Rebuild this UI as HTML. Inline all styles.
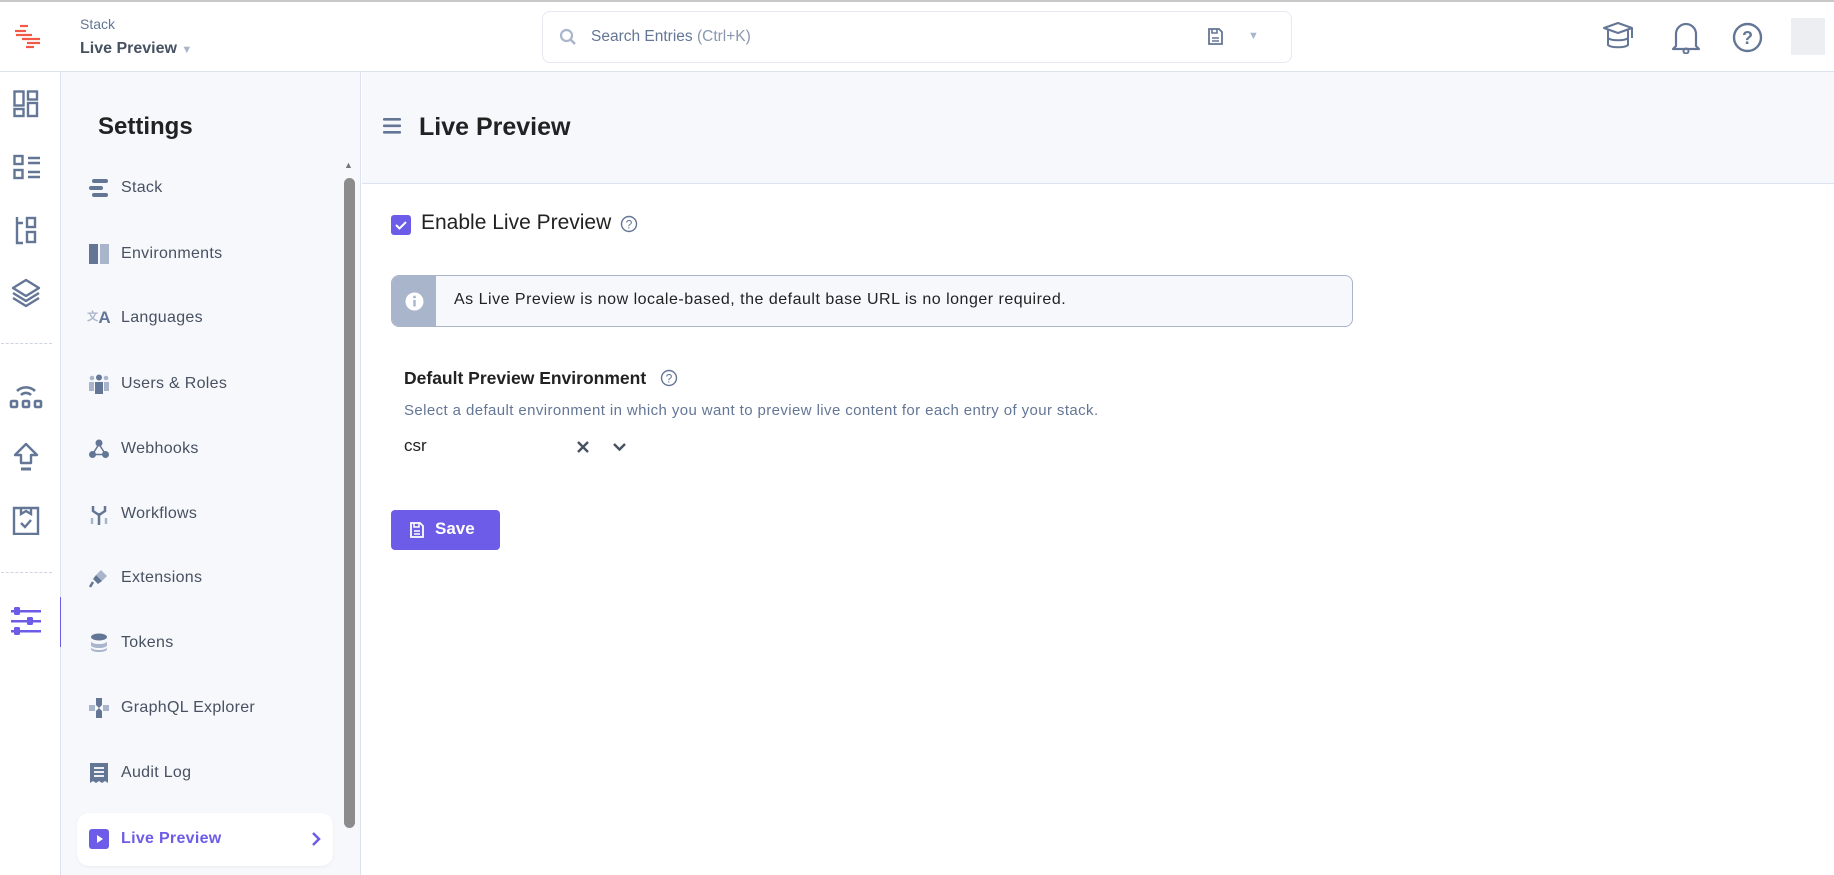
<!DOCTYPE html>
<html><head><meta charset="utf-8"><style>
*{box-sizing:border-box;margin:0;padding:0}
body{width:1834px;height:875px;overflow:hidden;background:#fff;font-family:"Liberation Sans",sans-serif;color:#475161;position:relative}
.abs{position:absolute}
.top{left:0;top:0;width:1834px;height:72px;border-top:2px solid #c8c8c8;border-bottom:1px solid #dde3ee;background:#fff}
.nav{left:0;top:72px;width:61px;height:803px;background:#fff;border-right:1px solid #dde3ee}
.side{left:61px;top:72px;width:300px;height:803px;background:#f7f8fc;border-right:1px solid #dde3ee}
.item{position:absolute;left:0;width:270px;height:40px;display:flex;align-items:center;font-size:16px;color:#475161;letter-spacing:.3px}
.item .ic{width:22px;margin-left:27px;margin-right:11px;display:flex;justify-content:center}
.ph{left:362px;top:72px;width:1472px;height:112px;background:#f7f8fc;border-bottom:1px solid #dde3ee}
svg{display:block}
</style></head><body>
<div class="abs top">
 <svg class="abs" style="left:12px;top:22px" width="30" height="26" viewBox="0 0 30 26"><g stroke="#f05a47" stroke-width="2.2"><line x1="8" y1="2" x2="16" y2="2"/><line x1="3" y1="7" x2="14" y2="7"/><line x1="4" y1="11" x2="20" y2="11"/><line x1="10" y1="15" x2="28" y2="15"/><line x1="15" y1="19" x2="28" y2="19"/><line x1="14" y1="23" x2="22" y2="23"/></g></svg>
 <div class="abs" style="left:80px;top:14px;font-size:14px;color:#647696">Stack</div>
 <div class="abs" style="left:80px;top:38px;font-size:16px;font-weight:bold;color:#475161">Live Preview <span style="color:#a9b5cb;font-size:11px">▼</span></div>
 <div class="abs" style="left:542px;top:9px;width:750px;height:52px;border:1px solid #e6e9f0;border-radius:8px">
  <svg class="abs" style="left:16px;top:16px" width="18" height="18" viewBox="0 0 18 18"><circle cx="7.5" cy="7.5" r="5.5" stroke="#a9b5cb" stroke-width="2.2" fill="none"/><line x1="11.5" y1="11.5" x2="16" y2="16" stroke="#a9b5cb" stroke-width="2.5"/></svg>
  <div class="abs" style="left:48px;top:16px;font-size:15.5px;color:#647696">Search Entries <span style="color:#8a97ad">(Ctrl+K)</span></div>
  <svg class="abs" style="left:664px;top:16px" width="16" height="17" viewBox="0 0 16 17"><path d="M2 1h10l3 3v12H2z" fill="none" stroke="#647696" stroke-width="1.8"/><path d="M5 1v4h5V1M5 10h7M5 13h7" stroke="#647696" stroke-width="1.6" fill="none"/></svg>
  <div class="abs" style="left:705px;top:18px;font-size:11px;color:#a9b5cb">▼</div>
 </div>
 <svg class="abs" style="left:1601px;top:19px" width="34" height="30" viewBox="0 0 34 30"><path d="M3 7L17 2l14 5-14 5z" fill="none" stroke="#647696" stroke-width="2" stroke-linejoin="round"/><path d="M7 9v15c3 3 17 3 20 0V9M7 17c3 3 17 3 20 0M31 7v10" fill="none" stroke="#647696" stroke-width="2"/></svg>
 <svg class="abs" style="left:1670px;top:18px" width="32" height="34" viewBox="0 0 32 34"><path d="M6 26V14a10 10 0 0120 0v12l3 3H3z" fill="none" stroke="#647696" stroke-width="2.2" stroke-linejoin="round"/><circle cx="16" cy="31" r="2.5" fill="none" stroke="#647696" stroke-width="2"/></svg>
 <svg class="abs" style="left:1732px;top:20px" width="31" height="31" viewBox="0 0 31 31"><circle cx="15.5" cy="15.5" r="13.5" fill="none" stroke="#647696" stroke-width="2.4"/><text x="15.5" y="22" text-anchor="middle" font-family="Liberation Sans" font-weight="bold" font-size="18" fill="#647696">?</text></svg>
 <div class="abs" style="left:1791px;top:16px;width:34px;height:37px;background:#edeef1"></div>
</div>
<div class="abs nav">
 <svg class="abs" style="left:13px;top:18px" width="26" height="28" viewBox="0 0 26 28" fill="none" stroke="#647696" stroke-width="2.4"><rect x="1.5" y="1.5" width="9" height="14"/><rect x="15" y="1.5" width="9" height="8"/><rect x="1.5" y="19" width="9" height="7"/><rect x="15" y="13" width="9" height="13"/></svg>
 <svg class="abs" style="left:13px;top:82px" width="28" height="26" viewBox="0 0 28 26" fill="none" stroke="#647696" stroke-width="2.4"><rect x="1.5" y="2" width="8" height="8"/><rect x="1.5" y="16" width="8" height="8"/><path d="M15 4h12M15 9h12M15 18h12M15 23h12"/></svg>
 <svg class="abs" style="left:15px;top:143px" width="24" height="30" viewBox="0 0 24 30" fill="none" stroke="#647696" stroke-width="2.4"><path d="M2 2v26h6M2 8h6"/><rect x="12" y="3" width="8" height="9"/><rect x="12" y="17" width="8" height="10"/></svg>
 <svg class="abs" style="left:11px;top:206px" width="30" height="30" viewBox="0 0 30 30" fill="none" stroke="#647696" stroke-width="2.4" stroke-linejoin="round"><path d="M15 2L28 10 15 18 2 10z"/><path d="M2 15l13 8 13-8M2 20l13 8 13-8"/></svg>
 <div class="abs" style="left:1px;top:271px;width:51px;border-top:1px dashed #cfd5df"></div>
 <svg class="abs" style="left:9px;top:308px" width="34" height="30" viewBox="0 0 34 30" fill="none" stroke="#647696" stroke-width="2.6"><path d="M8 11a13 13 0 0118 0M12 15a7 7 0 0110 0"/><rect x="2" y="21" width="6" height="6" rx="1"/><rect x="14" y="21" width="6" height="6" rx="1"/><rect x="26" y="21" width="6" height="6" rx="1"/></svg>
 <svg class="abs" style="left:13px;top:370px" width="26" height="30" viewBox="0 0 26 30" fill="none" stroke="#647696" stroke-width="2.4" stroke-linejoin="round"><path d="M13 2L2 13h6v8h10v-8h6z"/><path d="M8 27h10" stroke-width="3"/></svg>
 <svg class="abs" style="left:12px;top:433px" width="28" height="30" viewBox="0 0 28 30" fill="none" stroke="#647696" stroke-width="2.4"><path d="M2 3h24v26H2z"/><path d="M9 3v6l5-3 5 3V3M9 18l4 4 6-7"/></svg>
 <div class="abs" style="left:1px;top:500px;width:51px;border-top:1px dashed #cfd5df"></div>
 <div class="abs" style="left:60px;top:525px;width:2px;height:50px;background:#6c5ce7"></div>
 <svg class="abs" style="left:10px;top:534px" width="32" height="30" viewBox="0 0 32 30" fill="#6c5ce7"><rect x="1" y="4" width="30" height="2.5"/><rect x="1" y="14" width="30" height="2.5"/><rect x="1" y="24" width="30" height="2.5"/><rect x="4" y="1" width="6" height="8" rx="1.5"/><rect x="17" y="11" width="6" height="8" rx="1.5"/><rect x="4" y="21" width="6" height="8" rx="1.5"/></svg>
</div>
<div class="abs side">
 <div class="abs" style="left:37px;top:41px;font-size:24px;font-weight:bold;color:#222">Settings</div>
 <div class="item" style="top:96px"><span class="ic"><svg width="20" height="18" viewBox="0 0 20 18" fill="#647696"><rect x="3" y="0" width="16" height="4" rx="2"/><rect x="0" y="7" width="14" height="4" rx="2"/><rect x="3" y="14" width="16" height="4" rx="2"/></svg></span>Stack</div>
 <div class="item" style="top:162px"><span class="ic"><svg width="20" height="20" viewBox="0 0 20 20"><rect x="0" y="0" width="9" height="20" fill="#647696"/><rect x="11" y="0" width="9" height="20" fill="#a9b5cb"/></svg></span>Environments</div>
 <div class="item" style="top:226px"><span class="ic" style="font-weight:bold;color:#647696;font-size:17px"><span style="font-size:11px;color:#a9b5cb;vertical-align:top">文</span>A</span>Languages</div>
 <div class="item" style="top:292px"><span class="ic"><svg width="20" height="20" viewBox="0 0 20 20"><circle cx="10" cy="3.5" r="3" fill="#647696"/><circle cx="3" cy="4" r="2.3" fill="#a9b5cb"/><circle cx="17" cy="4" r="2.3" fill="#a9b5cb"/><rect x="6" y="8" width="8" height="12" fill="#647696"/><rect x="0" y="8" width="5" height="9" fill="#a9b5cb"/><rect x="15" y="8" width="5" height="9" fill="#a9b5cb"/></svg></span>Users &amp; Roles</div>
 <div class="item" style="top:357px"><span class="ic"><svg width="20" height="20" viewBox="0 0 20 20" fill="#647696"><circle cx="10" cy="4" r="3.5"/><circle cx="3.5" cy="15.5" r="3.5"/><circle cx="16.5" cy="15.5" r="3.5"/><path d="M10 5L3.5 15.5h13z" fill="none" stroke="#647696" stroke-width="1.5"/></svg></span>Webhooks</div>
 <div class="item" style="top:422px"><span class="ic"><svg width="20" height="22" viewBox="0 0 20 22" fill="none" stroke-width="2.5"><path d="M10 10v12" stroke="#647696"/><path d="M4 3v5l6 4 6-4V3" stroke="#647696"/><path d="M3 21v-6M17 21v-6" stroke="#a9b5cb"/></svg></span>Workflows</div>
 <div class="item" style="top:486px"><span class="ic"><svg width="20" height="20" viewBox="0 0 20 20"><path d="M12 2l6 6-5 5-6-6z" fill="#a9b5cb"/><path d="M7 7l6 6-4 3-5-5z" fill="#647696"/><path d="M4 14l-3 5" stroke="#647696" stroke-width="2.5"/></svg></span>Extensions</div>
 <div class="item" style="top:551px"><span class="ic"><svg width="18" height="20" viewBox="0 0 18 20"><ellipse cx="9" cy="4" rx="8" ry="3.5" fill="#647696"/><path d="M1 8c0 4 16 4 16 0v4c0 4-16 4-16 0z" fill="#a9b5cb"/><path d="M1 14c0 4 16 4 16 0v2c0 4-16 4-16 0z" fill="#a9b5cb"/></svg></span>Tokens</div>
 <div class="item" style="top:616px"><span class="ic"><svg width="20" height="20" viewBox="0 0 20 20"><rect x="0" y="7" width="6" height="6" fill="#a9b5cb"/><rect x="14" y="7" width="6" height="6" fill="#a9b5cb"/><path d="M7 0h6v7l-3 3-3-3zM7 20h6v-7l-3-3-3 3z" fill="#647696"/></svg></span>GraphQL Explorer</div>
 <div class="item" style="top:681px"><span class="ic"><svg width="18" height="20" viewBox="0 0 18 20"><path d="M0 0h18v20l-3-2-3 2-3-2-3 2-3-2-3 2z" fill="#647696"/><path d="M4 5h10M4 9h10M4 13h10" stroke="#fff" stroke-width="1.8"/></svg></span>Audit Log</div>
 <div class="abs" style="left:16px;top:741px;width:256px;height:53px;background:#fff;border-radius:12px;box-shadow:0 1px 3px rgba(0,0,0,.05)"></div>
 <div class="item" style="top:747px;color:#6c5ce7;font-weight:bold;width:260px"><span class="ic"><svg width="20" height="20" viewBox="0 0 20 20"><rect width="20" height="20" rx="3" fill="#6c5ce7"/><path d="M8 6l6 4-6 4z" fill="#fff"/></svg></span>Live Preview<svg style="margin-left:auto" width="10" height="16" viewBox="0 0 10 16"><path d="M2 2l6 6-6 6" fill="none" stroke="#6c5ce7" stroke-width="2.5"/></svg></div>
 <div class="abs" style="left:283px;top:88px;font-size:9px;color:#777">▲</div>
 <div class="abs" style="left:283px;top:106px;width:11px;height:650px;background:#8c8c8c;border-radius:6px"></div>
</div>
<div class="abs ph">
 <svg class="abs" style="left:21px;top:46px" width="18" height="16" viewBox="0 0 18 16" fill="#647696"><rect y="0" width="18" height="2.6" rx="1"/><rect y="6.5" width="18" height="2.6" rx="1"/><rect y="13" width="18" height="2.6" rx="1"/></svg>
 <div class="abs" style="left:57px;top:41px;font-size:25px;font-weight:bold;color:#222">Live Preview</div>
</div>
<div class="abs" style="left:391px;top:215px;width:20px;height:20px;background:#6c5ce7;border-radius:3px"><svg width="20" height="20" viewBox="0 0 20 20"><path d="M5 10l3.5 3.5L15 7" fill="none" stroke="#fff" stroke-width="2"/></svg></div>
<div class="abs" style="left:421px;top:211px;font-size:21px;color:#222">Enable Live Preview</div>
<svg class="abs" style="left:620px;top:215px" width="18" height="18" viewBox="0 0 18 18"><circle cx="9" cy="9" r="7.5" fill="none" stroke="#647696" stroke-width="1.4"/><text x="9" y="13.5" text-anchor="middle" font-family="Liberation Sans" font-size="12" fill="#647696">?</text></svg>
<div class="abs" style="left:391px;top:275px;width:962px;height:52px;border:1px solid #a9b5cb;border-radius:8px;background:#f7f8fc;overflow:hidden">
 <div class="abs" style="left:0;top:0;width:44px;height:52px;background:#a9b5cb"></div>
 <svg class="abs" style="left:13px;top:16px" width="19" height="19" viewBox="0 0 19 19"><circle cx="9.5" cy="9.5" r="9" fill="#fff"/><rect x="8.3" y="8" width="2.4" height="6.5" fill="#a9b5cb"/><circle cx="9.5" cy="5" r="1.4" fill="#a9b5cb"/></svg>
 <div class="abs" style="left:62px;top:15px;font-size:16px;letter-spacing:.5px;color:#222">As Live Preview is now locale-based, the default base URL is no longer required.</div>
</div>
<div class="abs" style="left:404px;top:368px;font-size:17.5px;font-weight:bold;color:#222">Default Preview Environment</div>
<svg class="abs" style="left:660px;top:369px" width="18" height="18" viewBox="0 0 18 18"><circle cx="9" cy="9" r="7.5" fill="none" stroke="#647696" stroke-width="1.4"/><text x="9" y="13.5" text-anchor="middle" font-family="Liberation Sans" font-size="12" fill="#647696">?</text></svg>
<div class="abs" style="left:404px;top:402px;font-size:15px;letter-spacing:.4px;color:#647696">Select a default environment in which you want to preview live content for each entry of your stack.</div>
<div class="abs" style="left:404px;top:436px;font-size:17px;color:#222">csr</div>
<svg class="abs" style="left:577px;top:441px" width="12" height="12" viewBox="0 0 12 12"><path d="M1 1l10 10M11 1L1 11" stroke="#475161" stroke-width="2.4"/></svg>
<svg class="abs" style="left:612px;top:442px" width="15" height="10" viewBox="0 0 15 10"><path d="M2 2l5.5 5.5L13 2" fill="none" stroke="#475161" stroke-width="2.4"/></svg>
<div class="abs" style="left:391px;top:510px;width:109px;height:40px;background:#6c5ce7;border-radius:4px;color:#fff;font-size:17px;font-weight:bold">
 <svg class="abs" style="left:19px;top:12px" width="14" height="16" viewBox="0 0 14 16"><path d="M1 1h9l3 3v11H1z" fill="none" stroke="#fff" stroke-width="1.8"/><path d="M4 1v4h5V1M4 9h6M4 12h6" stroke="#fff" stroke-width="1.5" fill="none"/></svg>
 <span class="abs" style="left:44px;top:9px">Save</span>
</div>
</body></html>
